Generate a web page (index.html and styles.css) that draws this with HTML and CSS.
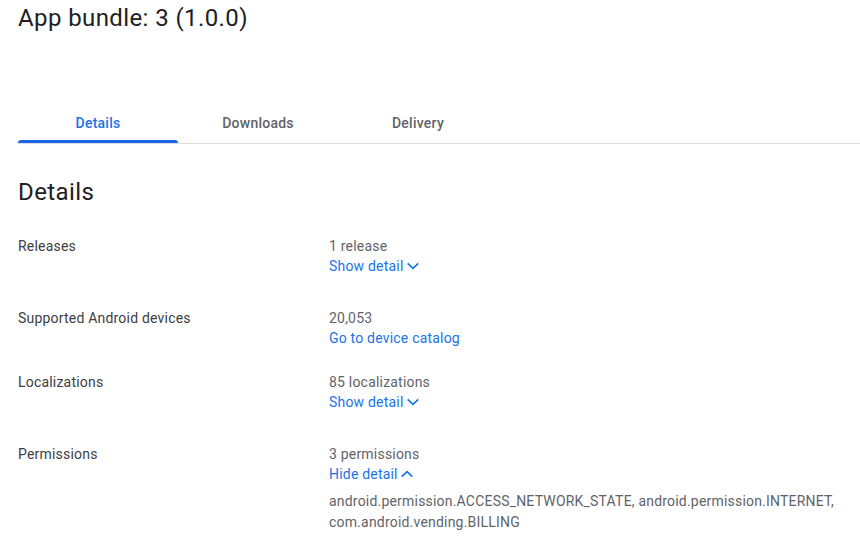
FILE: index.html
```html
<!DOCTYPE html>
<html lang="en">
<head>
<meta charset="utf-8">
<title>App bundle</title>
<link rel="stylesheet" href="styles.css">
</head>
<body>
<div class="page">
  <h1 class="title">App bundle: 3 (1.0.0)</h1>
  <nav class="tabs">
    <div class="tab active">Details</div>
    <div class="tab">Downloads</div>
    <div class="tab">Delivery</div>
  </nav>
  <h2 class="section-title">Details</h2>
  <div class="rows">
    <div class="row">
      <div class="label">Releases</div>
      <div class="value">
        <div>1 release</div>
        <a class="toggle">Show detail<svg viewBox="0 0 24 24" width="24" height="24"><path d="M6.7 9.3 12 14.3l5.3-5" fill="none" stroke="currentColor" stroke-width="1.7"/></svg></a>
      </div>
    </div>
    <div class="row">
      <div class="label">Supported Android devices</div>
      <div class="value">
        <div>20,053</div>
        <a class="link">Go to device catalog</a>
      </div>
    </div>
    <div class="row">
      <div class="label">Localizations</div>
      <div class="value">
        <div>85 localizations</div>
        <a class="toggle">Show detail<svg viewBox="0 0 24 24" width="24" height="24"><path d="M6.7 9.3 12 14.3l5.3-5" fill="none" stroke="currentColor" stroke-width="1.7"/></svg></a>
      </div>
    </div>
    <div class="row">
      <div class="label">Permissions</div>
      <div class="value">
        <div>3 permissions</div>
        <a class="toggle open">Hide detail<svg viewBox="0 0 24 24" width="24" height="24"><path d="M6.7 14.7 12 9.7l5.3 5" fill="none" stroke="currentColor" stroke-width="1.7"/></svg></a>
        <div class="perm-list">android.permission.ACCESS_NETWORK_STATE, android.permission.INTERNET, com.android.vending.BILLING</div>
      </div>
    </div>
  </div>
</div>
</body>
</html>
```

FILE: styles.css
```css
* { box-sizing: border-box; }
html, body { margin: 0; padding: 0; background: #fff; }
body {
  font-family: Roboto, "Liberation Sans", Arial, sans-serif;
  font-size: 14px;
  line-height: 20px;
  letter-spacing: 0.2px;
  color: #3c4043;
  overflow: hidden;
}
.page { padding: 2px 0 0 18px; }
.title {
  margin: 0;
  font-size: 24px;
  line-height: 32px;
  font-weight: 400;
  letter-spacing: 0.4px;
  color: #202124;
}
.tabs {
  display: flex;
  margin-top: 63px;
  border-bottom: 1px solid #dadce0;
  height: 47px;
}
.tab {
  width: 160px;
  display: flex;
  align-items: center;
  justify-content: center;
  padding-top: 5px;
  font-weight: 500;
  letter-spacing: 0.25px;
  color: #5f6368;
  position: relative;
}
.tab.active { color: #1a73e8; }
.tab.active::after {
  content: "";
  position: absolute;
  left: 0; right: 0; bottom: 0;
  height: 3px;
  background: #1a66e8;
  border-radius: 3px 3px 0 0;
}
.section-title {
  margin: 32px 0 0;
  font-size: 24px;
  line-height: 32px;
  font-weight: 400;
  letter-spacing: 0.4px;
  color: #202124;
}
.rows { margin-top: 16px; }
.row {
  display: flex;
  padding: 12px 0;
}
.label { width: 311px; flex: none; color: #3c4043; }
.value { flex: 1; color: #5f6368; }
.link, .toggle { color: #1a73e8; text-decoration: none; cursor: pointer; }
.link { display: block; }
.toggle {
  display: flex;
  align-items: center;
  height: 20px;
  margin-bottom: 8px;
}
.toggle svg { flex: none; margin: -2px 0 -2px -3px; }
.toggle.open { margin-bottom: 7px; }
.perm-list { line-height: 21px; }
```
